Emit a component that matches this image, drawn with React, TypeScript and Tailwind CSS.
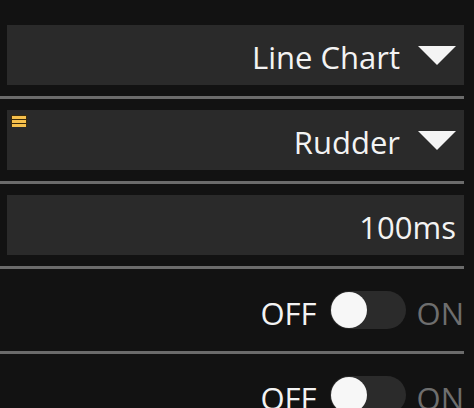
import React from "react";

const font = { fontFamily: '"Open Sans", "Noto Sans", sans-serif' };

function Triangle() {
  return (
    <svg width="38" height="19" viewBox="0 0 38 19" className="shrink-0">
      <polygon points="0,0 38,0 19,19" fill="#f4f4f4" />
    </svg>
  );
}

function Sep() {
  return <div className="h-[3px] w-full bg-[#6b6b6b]" />;
}

function BoxRow({ children, icon }: { children: React.ReactNode; icon?: boolean }) {
  return (
    <div className="h-[82px] flex items-center pl-[7px]">
      <div className="relative h-[60px] flex-1 bg-[#2a2a2a] flex items-center justify-end pr-[8px] gap-[18px]">
        {icon && (
          <div className="absolute left-[4px] top-[5px] w-[16px] h-[12px] bg-[#3b2b0c] flex flex-col justify-center gap-[1px] px-[1px]">
            <div className="h-[3px] bg-[#f6c04c]" />
            <div className="h-[3px] bg-[#f6c04c]" />
            <div className="h-[3px] bg-[#f6c04c]" />
          </div>
        )}
        {children}
      </div>
    </div>
  );
}

function ToggleRow() {
  return (
    <div className="h-[82px] flex items-center justify-end">
      <span className="text-[31px] leading-none pt-[6px] text-[#f3f3f3]">OFF</span>
      <div className="ml-[13px] w-[76px] h-[38px] rounded-full bg-[#2b2b2b] flex items-center pl-[1px]">
        <div className="w-[36px] h-[36px] rounded-full bg-[#f7f7f7]" />
      </div>
      <span className="ml-[11px] text-[31px] leading-none pt-[6px] text-[#6e6e6e]">ON</span>
    </div>
  );
}

export default function App() {
  return (
    <div className="w-[474px] h-[408px] overflow-hidden bg-[#121212]" style={font}>
      <div className="w-[464px] pt-[14px] flex flex-col">
        <BoxRow>
          <span className="text-[31px] leading-none pt-[4px] text-[#f3f3f3]">Line Chart</span>
          <Triangle />
        </BoxRow>
        <Sep />
        <BoxRow icon>
          <span className="text-[31px] leading-none pt-[4px] text-[#f3f3f3]">Rudder</span>
          <Triangle />
        </BoxRow>
        <Sep />
        <BoxRow>
          <span className="text-[31px] leading-none pt-[5px] text-[#f3f3f3] pr-0">100ms</span>
        </BoxRow>
        <Sep />
        <ToggleRow />
        <Sep />
        <ToggleRow />
      </div>
    </div>
  );
}
